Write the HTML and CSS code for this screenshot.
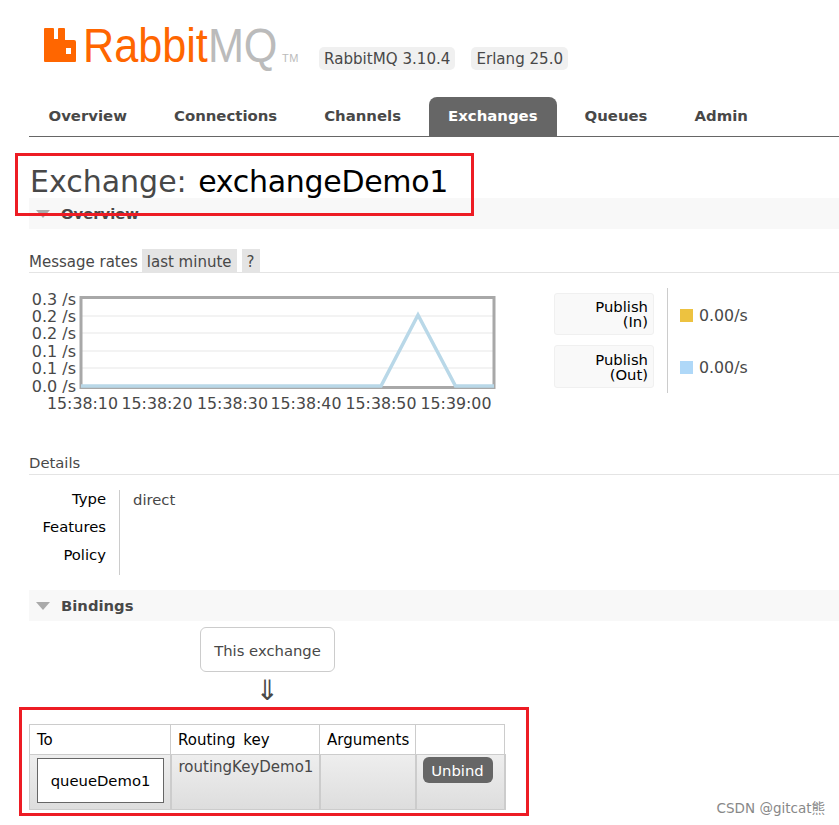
FILE: index.html
```html
<!DOCTYPE html>
<html lang="en">
<head>
<meta charset="utf-8">
<title>RabbitMQ Management</title>
<link rel="stylesheet" href="styles.css">
</head>
<body>
<header class="header">
  <div class="logo">
    <svg class="logo-icon" width="32" height="34" viewBox="0 0 32 34"><path fill="#f60" fill-rule="evenodd" d="M1 0h8a1 1 0 0 1 1 1v10h4V1a1 1 0 0 1 1-1h5a1 1 0 0 1 1 1v10.500a.5.500 0 0 0 .5.500H30a2 2 0 0 1 2 2v19a1 1 0 0 1-1 1H1a1 1 0 0 1-1-1V1a1 1 0 0 1 1-1zM22 20v6h5v-6z"/></svg>
    <span class="logo-text"><span class="logo-rabbit">Rabbit</span><span class="logo-mq">MQ</span></span>
    <span class="logo-tm">TM</span>
  </div>
  <div class="versions">
    <span class="version">RabbitMQ 3.10.4</span>
    <span class="version">Erlang 25.0</span>
  </div>
</header>
<nav>
  <ul class="tabs">
    <li class="tab">Overview</li>
    <li class="tab">Connections</li>
    <li class="tab">Channels</li>
    <li class="tab active">Exchanges</li>
    <li class="tab">Queues</li>
    <li class="tab">Admin</li>
  </ul>
</nav>
<main class="main">
  <h1 class="title">Exchange: <b>exchangeDemo1</b></h1>
  <h2 class="section"><span class="tri"></span>Overview</h2>
  <div class="rates-head">
    <span class="h3 rates-title">Message rates</span>
    <span class="chip chip-wide">last minute</span>
    <span class="chip">?</span>
  </div>
  <div class="chart-row">
    <svg class="chart" width="470" height="140" viewBox="0 0 470 140">
      <g class="ticks" text-anchor="end">
        <text x="47" y="32">0.3 /s</text>
        <text x="47" y="49">0.2 /s</text>
        <text x="47" y="66">0.2 /s</text>
        <text x="47" y="84">0.1 /s</text>
        <text x="47" y="101">0.1 /s</text>
        <text x="47" y="119">0.0 /s</text>
      </g>
      <path d="M52 43H465M52 60H465M52 78H465M52 95H465" stroke="#f0f0f0" stroke-width="1.500"/>
      <path d="M52 24.500V114.500H465V24.500Z" fill="none" stroke="#a8a8a8" stroke-width="3"/>
      <path d="M52 113H352L389 42L426.500 113H465" fill="none" stroke="#b9d8e8" stroke-width="3.500"/>
      <g class="ticks ticks-time" text-anchor="middle">
        <text x="53.500" y="136">15:38:10</text>
        <text x="128" y="136">15:38:20</text>
        <text x="203.500" y="136">15:38:30</text>
        <text x="277" y="136">15:38:40</text>
        <text x="352" y="136">15:38:50</text>
        <text x="427" y="136">15:39:00</text>
      </g>
    </svg>
    <div class="legend">
      <div class="legend-labels">
        <div class="legend-label">Publish<br>(In)</div>
        <div class="legend-label legend-label-out">Publish<br>(Out)</div>
      </div>
      <div class="legend-values">
        <div class="legend-value"><span class="swatch swatch-in"></span>0.00/s</div>
        <div class="legend-value"><span class="swatch swatch-out"></span>0.00/s</div>
      </div>
    </div>
  </div>
  <div class="h3 details-head">Details</div>
  <div class="facts">
    <div class="fact-labels">
      <div class="fact-first">Type</div>
      <div>Features</div>
      <div>Policy</div>
    </div>
    <div class="fact-values">direct</div>
  </div>
  <h2 class="section bindings"><span class="tri"></span>Bindings</h2>
  <div class="flow">
    <div class="this-exchange">This exchange</div>
    <div class="arrow">⇓</div>
  </div>
  <table class="bind-table">
    <thead>
      <tr><th class="c1">To</th><th class="c2">Routing key</th><th class="c3">Arguments</th><th class="c4"></th></tr>
    </thead>
    <tbody>
      <tr>
        <td><div class="queue-box">queueDemo1</div></td>
        <td>routingKeyDemo1</td>
        <td></td>
        <td><button class="unbind">Unbind</button></td>
      </tr>
    </tbody>
  </table>
</main>
<div class="mark mark-title"></div>
<div class="mark mark-table"></div>
<div class="watermark">CSDN @gitcat熊</div>
</body>
</html>
```
FILE: styles.css
```css
* { box-sizing: border-box; }
html, body { margin: 0; padding: 0; }
body {
  position: relative;
  width: 839px;
  height: 825px;
  overflow: hidden;
  background: #fff;
  color: #484848;
  font-family: "DejaVu Sans", Verdana, sans-serif;
  font-size: 14.800px;
}
.header { display: flex; height: 97px; padding: 28px 0 0 44px; align-items: flex-start; }
.logo { display: flex; align-items: flex-start; width: 275px; height: 40px; }
.logo-icon { margin-right: 7px; flex: none; }
.logo-text { display: block; flex: none; width: 199px; font-family: "Liberation Sans", Arial, sans-serif; font-size: 48px; line-height: 36px; transform: scaleX(.9); transform-origin: left top; white-space: nowrap; }
.logo-rabbit { color: #f60; }
.logo-mq { color: #bbb; }
.logo-tm { flex: none; color: #bbb; font-size: 11px; line-height: 11px; letter-spacing: .5px; font-family: "Liberation Sans", Arial, sans-serif; margin-top: 25px; }
.versions { display: flex; gap: 16px; margin-top: 19px; }
.version { background: #f0f0f0; border-radius: 5px; padding: 0 5px; height: 23px; line-height: 24px; font-size: 15.100px; }
.tabs { display: flex; gap: 8px; list-style: none; margin: 0 0 0 29px; padding: 0; border-bottom: 1px solid #666; height: 40px; width: 810px; }
.tab { padding: 0 19.500px; height: 39px; line-height: 39px; font-weight: bold; font-size: 14.900px; }
.tab.active { background: #666; color: #fff; border-radius: 8px 8px 0 0; }
.main { padding-left: 29px; }
.title { margin: 26px 0 0; height: 35px; line-height: 37px; font-size: 30px; font-weight: normal; position: relative; z-index: 1; padding-left: 1px; }
.title b { font-weight: normal; color: #000; margin-left: 2px; letter-spacing: -.3px; }
.section { display: flex; align-items: center; height: 31px; margin: 0; background: #f8f8f8; font-size: 14.800px; font-weight: bold; }
.tri { width: 0; height: 0; margin: 0 11px 0 7px; border-left: 7px solid transparent; border-right: 7px solid transparent; border-top: 8px solid #aaa; }
.rates-head { display: flex; align-items: flex-end; height: 24px; margin-top: 20px; border-bottom: 1px solid #e4e4e4; }
.h3 { font-size: 15px; line-height: 23px; }
.rates-title { line-height: 26px; height: 23px; margin-right: -1px; }
.chip { background: #e4e4e4; min-width: 18px; height: 23px; line-height: 26px; padding: 0 5px; margin-left: 5px; text-align: center; font-size: 15px; }
.chart-row { display: flex; height: 180px; }
.chart { flex: none; overflow: visible; }
.ticks text { fill: #484848; font-family: "DejaVu Sans", Verdana, sans-serif; font-size: 16px; }
.ticks-time text { font-size: 15.800px; }
.legend { display: flex; margin: 15px 0 0 55px; height: 105px; }
.legend-labels { display: flex; flex-direction: column; gap: 10px; width: 114px; padding: 5px 13px 0 0; border-right: 1px solid #ccc; height: 105px; }
.legend-label { height: 42px; background: #f9f9f9; border: 1px solid #f0f0f0; border-radius: 3px; color: #000; text-align: right; padding: 5px 5px 0 0; line-height: 15px; }
.legend-label-out { height: 43px; padding-top: 6px; }
.legend-values { padding-left: 12px; display: flex; flex-direction: column; }
.legend-value { display: flex; align-items: center; height: 20px; margin-top: 17px; font-size: 15.800px; }
.legend-value + .legend-value { margin-top: 32px; }
.swatch { width: 13px; height: 13px; margin-right: 6px; }
.swatch-in { background: #edc240; }
.swatch-out { background: #afd8f8; }
.details-head { border-bottom: 1px solid #e4e4e4; height: 24px; line-height: 24px; margin-top: -2px; font-size: 14.800px; }
.facts { display: flex; margin-top: 15px; }
.fact-labels { width: 91px; height: 85px; padding-right: 13px; text-align: right; color: #000; border-right: 1px solid #ccc; line-height: 28px; }
.fact-first { margin-top: -5px; }
.fact-values { padding: 0 0 0 13px; line-height: 19px; }
.bindings { margin-top: 15px; }
.flow { display: flex; flex-direction: column; align-items: center; width: 135px; margin-left: 171px; }
.this-exchange { margin-top: 6px; width: 135px; height: 45px; line-height: 45px; text-align: center; border: 1px solid #ccc; border-radius: 6px; }
.arrow { height: 53px; line-height: 38px; font-size: 28px; margin-bottom: -1px; }
.bind-table { border-collapse: collapse; table-layout: fixed; width: 475px; font-size: 15px; }
.bind-table th, .bind-table td { border: 1px solid #ccc; padding: 0 7px; }
.bind-table th { height: 30px; font-weight: normal; color: #000; text-align: left; }
.c1 { width: 141px; }
.c2 { width: 149px; word-spacing: 3px; }
.c3 { width: 96px; }
.c4 { width: 89px; }
.bind-table tbody tr { background: linear-gradient(#eee, #ddd); }
.bind-table td { height: 55px; vertical-align: top; padding-top: 3px; border-width: 1px 2px 1px 1px; line-height: 19px; }
.queue-box { width: 127px; height: 45px; background: #fff; border: 1px solid #666; color: #000; text-align: center; line-height: 44px; font-size: 14.800px; }
.unbind { display: block; width: 70px; height: 26px; margin: -1px 0 0 -1px; border: 0; border-radius: 6px; background: #666; color: #fff; font: 14.800px "DejaVu Sans", Verdana, sans-serif; padding: 0; }
.mark { position: absolute; border: 3px solid #ed1c24; }
.mark-title { left: 15px; top: 153px; width: 459px; height: 63px; }
.mark-table { left: 19px; top: 707px; width: 510px; height: 109px; }
.watermark { position: absolute; right: 14px; top: 799px; color: #888; font-size: 13.500px; line-height: 18px; font-family: "DejaVu Sans", "Noto Sans CJK SC", sans-serif; }
```
